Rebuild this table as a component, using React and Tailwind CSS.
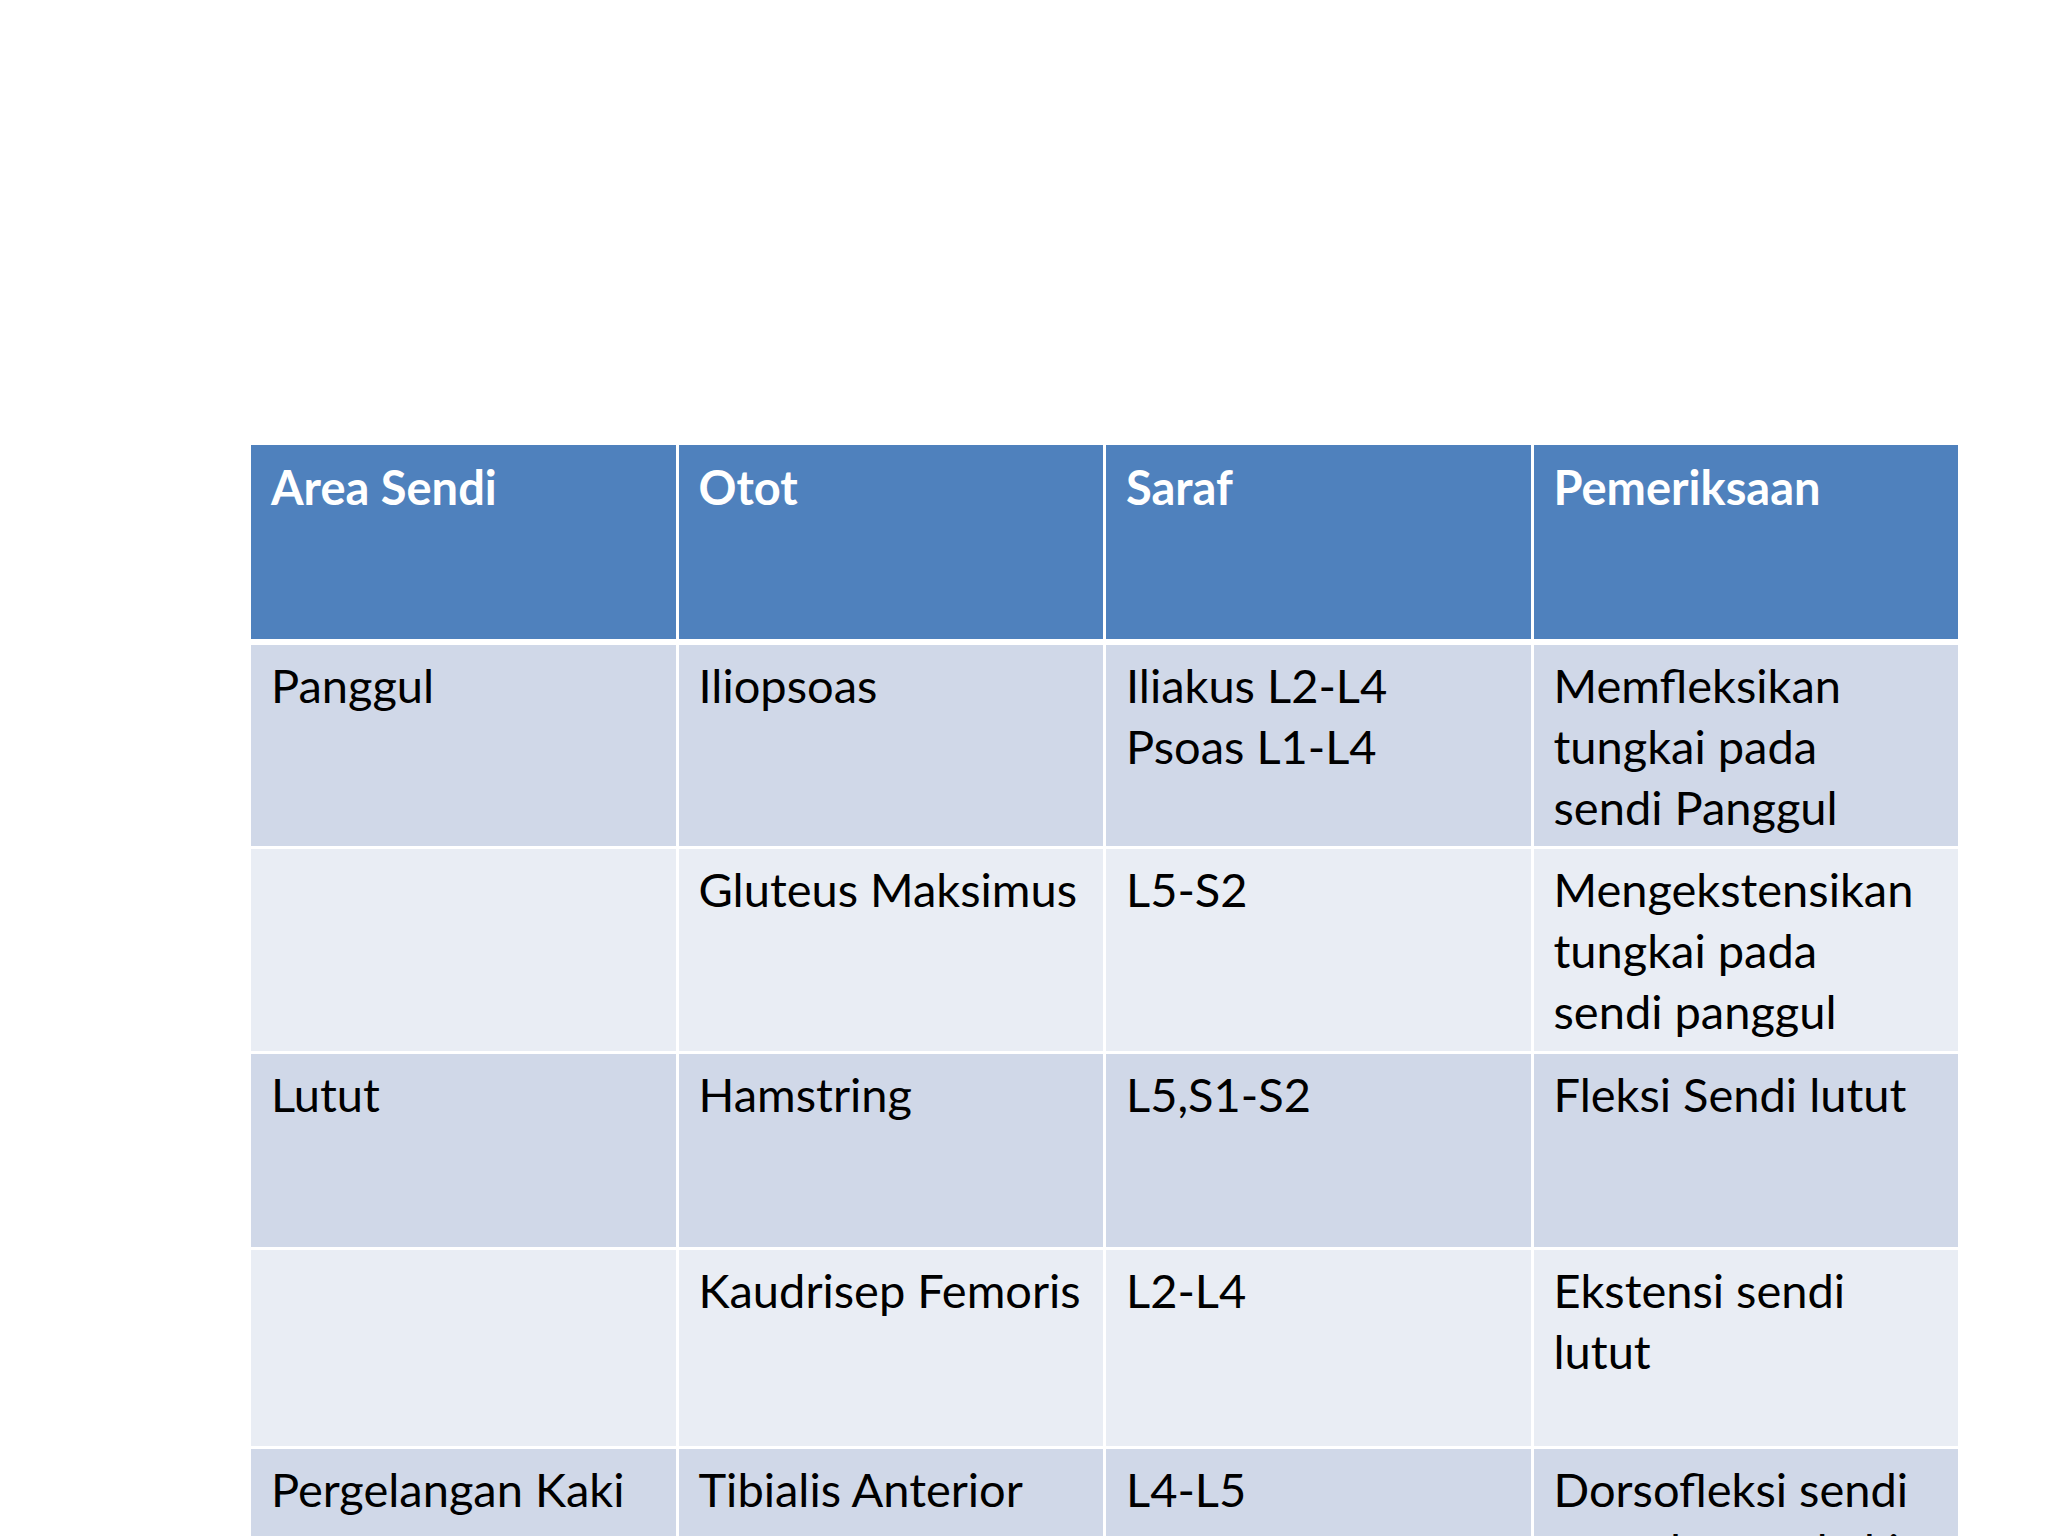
export default function App() {
  const rows = [
    { bg: "bg-[#D0D8E8]", h: "h-[201px]", cells: [["Panggul"], ["Iliopsoas"], ["Iliakus L2-L4", "Psoas L1-L4"], ["Memfleksikan", "tungkai pada", "sendi Panggul"]] },
    { bg: "bg-[#E9EDF4]", h: "h-[202px]", cells: [[""], ["Gluteus Maksimus"], ["L5-S2"], ["Mengekstensikan", "tungkai pada", "sendi panggul"]] },
    { bg: "bg-[#D0D8E8]", h: "h-[193px]", cells: [["Lutut"], ["Hamstring"], ["L5,S1-S2"], ["Fleksi Sendi lutut"]] },
    { bg: "bg-[#E9EDF4]", h: "h-[196px]", cells: [[""], ["Kaudrisep Femoris"], ["L2-L4"], ["Ekstensi sendi", "lutut"]] },
    { bg: "bg-[#D0D8E8]", h: "h-[200px]", cells: [["Pergelangan Kaki"], ["Tibialis Anterior"], ["L4-L5"], ["Dorsofleksi sendi", "pergelangan kaki"]] },
  ];
  const headers = ["Area Sendi", "Otot", "Saraf", "Pemeriksaan"];
  return (
    <div className="w-[2048px] h-[1536px] overflow-hidden bg-white" style={{ fontFamily: "Lato, 'Open Sans', sans-serif" }}>
      <div className="pt-[445px] pl-[251px] w-[1958px]">
        <div className="grid grid-cols-4 gap-x-[3px] h-[194px] bg-white">
          {headers.map((h) => (
            <div key={h} className="bg-[#4F81BD] text-white font-bold text-[47px] leading-[61px] pl-[20px] pt-[12px] whitespace-nowrap">
              {h}
            </div>
          ))}
        </div>
        <div className="h-[6px]" />
        <div className="flex flex-col gap-y-[3px]">
          {rows.map((r, i) => (
            <div key={i} className={`grid grid-cols-4 gap-x-[3px] ${r.h}`}>
              {r.cells.map((c, j) => (
                <div key={j} className={`${r.bg} text-black text-[47px] leading-[61px] pl-[20px] pt-[10px] whitespace-nowrap overflow-hidden`}>
                  {c.map((line, k) => (
                    <div key={k}>{line || "\u00a0"}</div>
                  ))}
                </div>
              ))}
            </div>
          ))}
        </div>
      </div>
    </div>
  );
}
